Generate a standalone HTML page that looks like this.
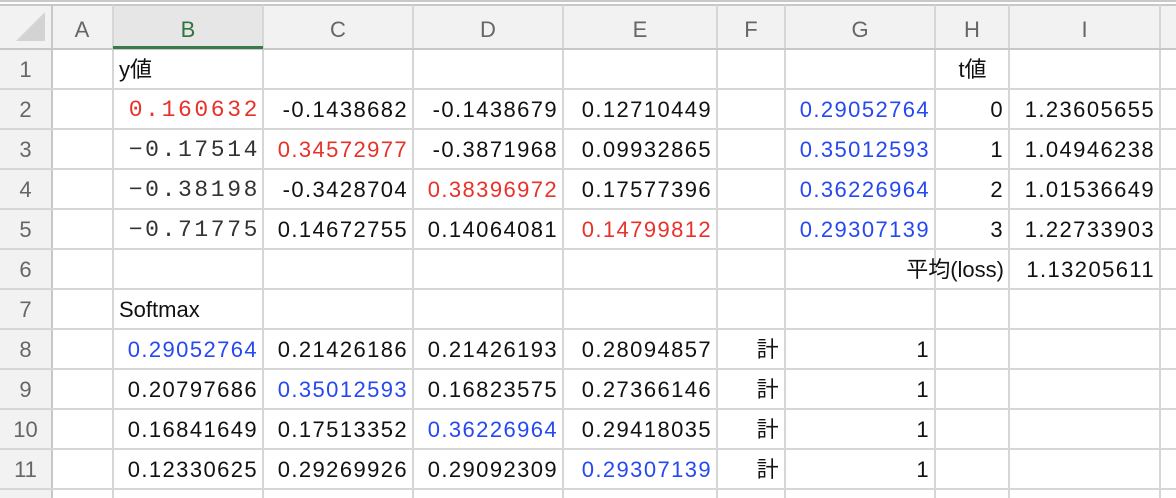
<!DOCTYPE html><html><head><meta charset="utf-8"><style>
body{margin:0;width:1176px;height:498px;overflow:hidden;background:#fff;font-family:"Liberation Sans","Noto Sans CJK JP",sans-serif;position:relative}
div{position:absolute;box-sizing:border-box}
.hb{background:#f2f2f2}
.v{top:5px;width:2px;height:493px;background:#d6d6d6}
.hl{left:0;height:2px;width:1176px;background:#d6d6d6}
.c{height:40px;line-height:40px;font-size:22px;letter-spacing:1.4px;color:#111;white-space:nowrap;padding:0 5px 0 6px;text-align:right}
.l{text-align:left;letter-spacing:0}.ctr{text-align:center;letter-spacing:0}
.m{font-family:"Liberation Mono",monospace;letter-spacing:2.6px;color:#333;font-size:23px}
.r{color:#e8312a}.b{color:#2648f0}
.hd{color:#666;font-size:22px;text-align:center;height:44px;line-height:50px;top:5px}
.rh{color:#666;text-align:center;left:0;width:51px;padding:0;letter-spacing:0}
</style></head><body>
<div style="left:0;top:0;width:1176px;height:6px;border-top:2px solid #c8c8c8;border-bottom:2px solid #c8c8c8"></div>
<div class="hb" style="left:0;top:6px;width:1176px;height:43px"></div>
<div class="hb" style="left:0;top:49px;width:51px;height:449px"></div>
<div style="left:113px;top:6px;width:150px;height:43px;background:#e6e6e6"></div>
<svg style="position:absolute;left:14px;top:12px" width="32" height="30"><polygon points="31,0 31,29 2,29" fill="#d3d3d3"/></svg>
<div class="v" style="left:51px;background:#c8c8c8"></div><div class="v" style="left:112px"></div><div class="v" style="left:262px"></div><div class="v" style="left:412px"></div><div class="v" style="left:562px"></div><div class="v" style="left:716px"></div><div class="v" style="left:784px"></div><div class="v" style="left:934px"></div><div class="v" style="left:1008px"></div><div class="v" style="left:1159px"></div>
<div class="hl" style="top:48px;background:#c8c8c8"></div><div class="hl" style="top:88px"></div><div class="hl" style="top:128px"></div><div class="hl" style="top:168px"></div><div class="hl" style="top:208px"></div><div class="hl" style="top:248px"></div><div class="hl" style="top:288px"></div><div class="hl" style="top:328px"></div><div class="hl" style="top:368px"></div><div class="hl" style="top:408px"></div><div class="hl" style="top:448px"></div><div class="hl" style="top:488px"></div>
<div style="left:113px;top:46px;width:150px;height:3px;background:#3a7a4a"></div>
<div class="hd" style="left:51px;width:62px">A</div><div class="hd" style="left:113px;width:150px;color:#2f7540">B</div><div class="hd" style="left:263px;width:150px">C</div><div class="hd" style="left:413px;width:150px">D</div><div class="hd" style="left:563px;width:154px">E</div><div class="hd" style="left:717px;width:68px">F</div><div class="hd" style="left:785px;width:150px">G</div><div class="hd" style="left:935px;width:74px">H</div><div class="hd" style="left:1009px;width:151px">I</div>
<div class="c rh" style="top:50px">1</div><div class="c rh" style="top:90px">2</div><div class="c rh" style="top:130px">3</div><div class="c rh" style="top:170px">4</div><div class="c rh" style="top:210px">5</div><div class="c rh" style="top:250px">6</div><div class="c rh" style="top:290px">7</div><div class="c rh" style="top:330px">8</div><div class="c rh" style="top:370px">9</div><div class="c rh" style="top:410px">10</div><div class="c rh" style="top:450px">11</div>
<div class="c l" style="top:50px;left:113px;width:150px">y値</div><div class="c ctr" style="top:50px;left:935px;width:74px">t値</div>
<div class="c m r" style="top:90px;left:113px;width:150px;padding-right:3px">0.160632</div><div class="c" style="top:90px;left:263px;width:150px">-0.1438682</div><div class="c" style="top:90px;left:413px;width:150px">-0.1438679</div><div class="c" style="top:90px;left:563px;width:154px">0.12710449</div><div class="c b" style="top:90px;left:785px;width:150px">0.29052764</div><div class="c" style="top:90px;left:935px;width:74px">0</div><div class="c" style="top:90px;left:1009px;width:151px">1.23605655</div>
<div class="c m" style="top:130px;left:113px;width:150px;padding-right:3px">−0.17514</div><div class="c r" style="top:130px;left:263px;width:150px">0.34572977</div><div class="c" style="top:130px;left:413px;width:150px">-0.3871968</div><div class="c" style="top:130px;left:563px;width:154px">0.09932865</div><div class="c b" style="top:130px;left:785px;width:150px">0.35012593</div><div class="c" style="top:130px;left:935px;width:74px">1</div><div class="c" style="top:130px;left:1009px;width:151px">1.04946238</div>
<div class="c m" style="top:170px;left:113px;width:150px;padding-right:3px">−0.38198</div><div class="c" style="top:170px;left:263px;width:150px">-0.3428704</div><div class="c r" style="top:170px;left:413px;width:150px">0.38396972</div><div class="c" style="top:170px;left:563px;width:154px">0.17577396</div><div class="c b" style="top:170px;left:785px;width:150px">0.36226964</div><div class="c" style="top:170px;left:935px;width:74px">2</div><div class="c" style="top:170px;left:1009px;width:151px">1.01536649</div>
<div class="c m" style="top:210px;left:113px;width:150px;padding-right:3px">−0.71775</div><div class="c" style="top:210px;left:263px;width:150px">0.14672755</div><div class="c" style="top:210px;left:413px;width:150px">0.14064081</div><div class="c r" style="top:210px;left:563px;width:154px">0.14799812</div><div class="c b" style="top:210px;left:785px;width:150px">0.29307139</div><div class="c" style="top:210px;left:935px;width:74px">3</div><div class="c" style="top:210px;left:1009px;width:151px">1.22733903</div>
<div style="left:936px;top:250px;width:72px;height:38px;background:#fff"></div>
<div class="c" style="top:250px;left:785px;width:224px;letter-spacing:0">平均(loss)</div><div class="c" style="top:250px;left:1009px;width:151px">1.13205611</div>
<div class="c l" style="top:290px;left:113px;width:150px">Softmax</div>
<div class="c b" style="top:330px;left:113px;width:150px">0.29052764</div><div class="c" style="top:330px;left:263px;width:150px">0.21426186</div><div class="c" style="top:330px;left:413px;width:150px">0.21426193</div><div class="c" style="top:330px;left:563px;width:154px">0.28094857</div><div class="c" style="top:330px;left:717px;width:68px">計</div><div class="c" style="top:330px;left:785px;width:150px">1</div>
<div class="c" style="top:370px;left:113px;width:150px">0.20797686</div><div class="c b" style="top:370px;left:263px;width:150px">0.35012593</div><div class="c" style="top:370px;left:413px;width:150px">0.16823575</div><div class="c" style="top:370px;left:563px;width:154px">0.27366146</div><div class="c" style="top:370px;left:717px;width:68px">計</div><div class="c" style="top:370px;left:785px;width:150px">1</div>
<div class="c" style="top:410px;left:113px;width:150px">0.16841649</div><div class="c" style="top:410px;left:263px;width:150px">0.17513352</div><div class="c b" style="top:410px;left:413px;width:150px">0.36226964</div><div class="c" style="top:410px;left:563px;width:154px">0.29418035</div><div class="c" style="top:410px;left:717px;width:68px">計</div><div class="c" style="top:410px;left:785px;width:150px">1</div>
<div class="c" style="top:450px;left:113px;width:150px">0.12330625</div><div class="c" style="top:450px;left:263px;width:150px">0.29269926</div><div class="c" style="top:450px;left:413px;width:150px">0.29092309</div><div class="c b" style="top:450px;left:563px;width:154px">0.29307139</div><div class="c" style="top:450px;left:717px;width:68px">計</div><div class="c" style="top:450px;left:785px;width:150px">1</div>
</body></html>
